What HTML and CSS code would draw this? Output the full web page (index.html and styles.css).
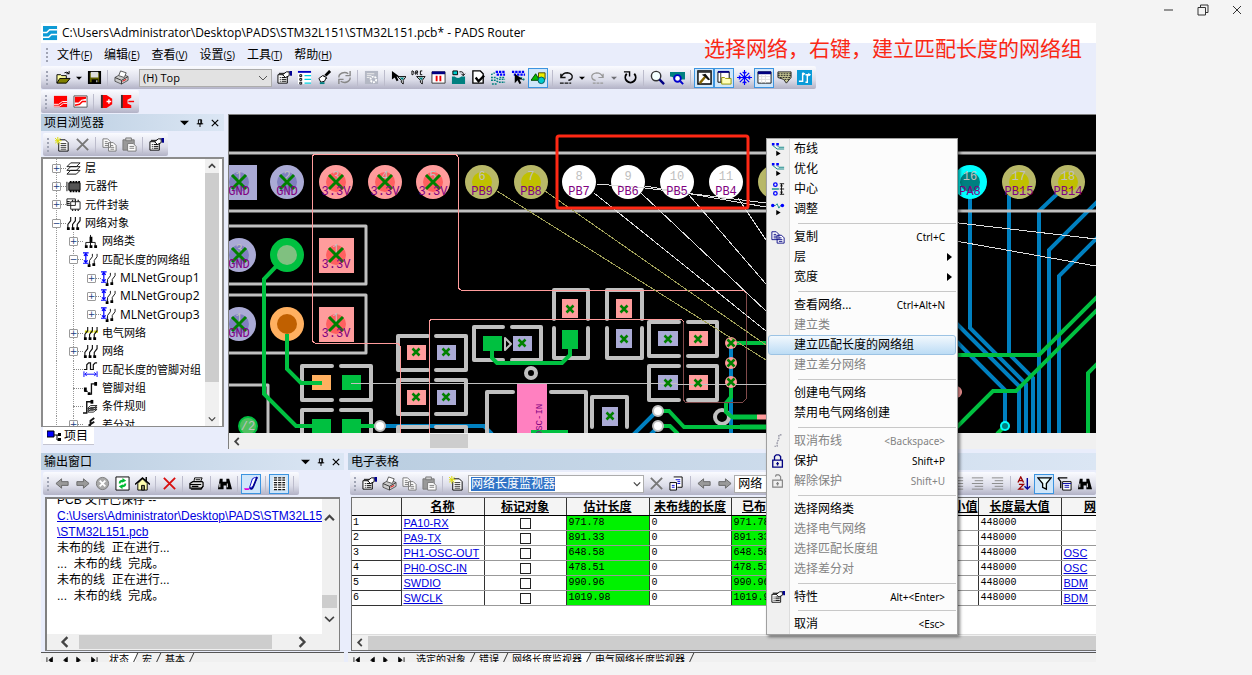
FILE: index.html
```html
<!DOCTYPE html>
<html lang="zh-CN">
<head>
<meta charset="utf-8">
<title>PADS Router</title>
<link rel="stylesheet" href="styles.css">
</head>
<body>
<svg class="defs" aria-hidden="true">
  <defs>
    <symbol id="i-open" viewBox="0 0 16 16"><path d="M1 14V5h4l1 1h5v3" fill="#ffffa0" stroke="#000"/><path d="M1 14l3-5h11l-4 5z" fill="#808000" stroke="#000"/><path d="M9 3q3-2 5 1m0-3v3h-3" fill="none" stroke="#000"/></symbol>
    <symbol id="i-save" viewBox="0 0 16 16"><path d="M2 2h12v12H2z" fill="#606000" stroke="#000" stroke-width="2"/><path d="M4 2h8v6H4z" fill="#ddd"/><path d="M5 10h7v4H5z" fill="#000"/><path d="M10 11h1v2h-1z" fill="#fff"/></symbol>
    <symbol id="i-print" viewBox="0 0 16 16"><path d="M1 8l7-4 7 3v4l-7 4-7-3z" fill="#ccc" stroke="#555"/><path d="M5 6l2-5 6 2-2 5z" fill="#fff" stroke="#555"/><path d="M1 8l7 3 7-4M8 11v4" fill="none" stroke="#333"/><path d="M9 12l4-2" stroke="#e00"/></symbol>
    <symbol id="i-print2" viewBox="0 0 16 16"><path d="M5 7l1-5h8l-2 5" fill="#fff" stroke="#000"/><path d="M1 8l3-2h10l1 1v4l-2 2H1z" fill="#ddd" stroke="#000" stroke-width="1.3"/><path d="M1 9h12M7 4h5M3 11h7M2 14h11l2-3" fill="none" stroke="#000" stroke-width="1.2"/></symbol>
    <symbol id="i-prop" viewBox="0 0 16 16"><path d="M1 5h10v9H1z" fill="#fff" stroke="#000"/><path d="M2 3h8v2H2z" fill="#333"/><path d="M3 8h1m1 0h5M3 10h1m1 0h5M3 12h1m1 0h5" stroke="#000"/><path d="M6 5l4-3h3v4L9 8z" fill="#fff" stroke="#000"/><path d="M13 1h3v5h-2z" fill="#000090"/></symbol>
    <symbol id="i-list" viewBox="0 0 16 16"><path d="M1 1h14v14H1z" fill="#fff"/><path d="M1 2h14" stroke="#0000c0" stroke-width="2"/><path d="M3 5h2v2H3zM3 9h2v2H3zM3 13h2v2H3z" fill="#fff" stroke="#000"/><path d="M8 6h7M8 10h7M8 14h7" stroke="#00d0e0" stroke-width="1.5"/></symbol>
    <symbol id="i-brush" viewBox="0 0 16 16"><path d="M14 1l-5 5" stroke="#000" stroke-width="3"/><path d="M7 5l4 4-4 1z" fill="#000"/><path d="M6 6l-4 3 2 4 4-1 2-4z" fill="#fff" stroke="#000"/><path d="M3 14h5" stroke="#008080" stroke-width="2"/></symbol>
    <symbol id="i-refresh" viewBox="0 0 16 16"><path d="M2 8a6 5 0 0 1 10-4m2-3v5H9M14 8a6 5 0 0 1-10 4m-2 3v-5h5" fill="none" stroke="#888" stroke-width="1.5"/></symbol>
    <symbol id="i-gear" viewBox="0 0 16 16"><path d="M1 1h14v14H1z" fill="#b4b8c4"/><path d="M3 4h8M3 6h5M3 8h3" stroke="#eee"/><circle cx="10" cy="10" r="3" fill="none" stroke="#fff" stroke-width="2" stroke-dasharray="2 1"/></symbol>
    <symbol id="i-cursor" viewBox="0 0 16 16"><path d="M1 1v9l3-2 2 4 2-1-2-4h3z" fill="#000"/><path d="M7 7h9l-3 4v4l-2-2v-2z" fill="#fff" stroke="#000"/><path d="M9 8h5l-2 3z" fill="#008080"/></symbol>
    <symbol id="i-drc" viewBox="0 0 16 16"><path d="M1 1v4h1l1-1V2L2 1zM5 5V1h2v2H5m1 0l1 2M12 1h-2v4h2" fill="none" stroke="#000"/><path d="M6 7h9l-3 4v4l-2-2v-2z" fill="#fff" stroke="#000"/><path d="M8 8h5l-2 3z" fill="#008080"/></symbol>
    <symbol id="i-cal" viewBox="0 0 16 16"><path d="M1 2h14v12H1z" fill="#fff" stroke="#333"/><path d="M1 3h14" stroke="#000080" stroke-width="3"/><path d="M6 6v6M10 6v6" stroke="#e00" stroke-width="2"/></symbol>
    <symbol id="i-comp" viewBox="0 0 16 16"><path d="M1 7h3a4 3 0 0 0 7 0h4v8H1z" fill="#008080"/><path d="M2 1h5v4H2z" fill="#0cc" stroke="#000"/><path d="M9 2q5-1 4 4m-2-2l2 2 2-2" fill="none" stroke="#000"/></symbol>
    <symbol id="i-check" viewBox="0 0 16 16"><path d="M2 1h8l3 3v10H2z" fill="#fff" stroke="#000" stroke-width="1.4"/><path d="M5 8l3 4 6-6" fill="none" stroke="#000" stroke-width="2.4"/></symbol>
    <symbol id="i-dots" viewBox="0 0 16 16"><path d="M5 2h10M6 5h9" stroke="#00f" stroke-width="2.500" stroke-dasharray="2.500 1"/><path d="M0 5l4-2M0 8h5l3 2h7M0 11h5l3 2h7M9 8h6M1 15h6" fill="none" stroke="#008080" stroke-width="1.500" stroke-dasharray="2 1"/></symbol>
    <symbol id="i-dotcur" viewBox="0 0 16 16"><path d="M1 2h14M3 5h12" stroke="#00f" stroke-width="2.500" stroke-dasharray="2.500 1"/><path d="M10 8l5 3" stroke="#008080" stroke-width="2" stroke-dasharray="2 1"/><path d="M4 4v10l3-3 2 4 2-1-2-4h4z" fill="#000"/></symbol>
    <symbol id="i-shapes" viewBox="0 0 16 16"><path d="M8 3h7v7H8z" fill="#ee0" stroke="#440"/><path d="M0 11l5-7 4 7z" fill="#0b0" stroke="#040"/><circle cx="11" cy="11" r="3.500" fill="#0cc" stroke="#055"/></symbol>
    <symbol id="i-undo" viewBox="0 0 16 16"><path d="M2 4v4h5M2 8q2-5 7-5 6 1 5 5-1 3-4 3" fill="none" stroke="#111" stroke-width="1.500"/><path d="M1 14h12" stroke="#111" stroke-width="1.500" stroke-dasharray="4 1"/></symbol>
    <symbol id="i-redo" viewBox="0 0 16 16"><path d="M14 4v4H9M14 8q-2-5-7-5-6 1-5 5 1 3 4 3" fill="none" stroke="#999" stroke-width="1.300"/><path d="M3 14h12" stroke="#999" stroke-width="1.400" stroke-dasharray="3 1"/></symbol>
    <symbol id="i-rot" viewBox="0 0 16 16"><path d="M4 4a5.500 5.500 0 1 0 8 0" fill="none" stroke="#000" stroke-width="2"/><path d="M1 2h6v5" fill="none" stroke="#000" stroke-width="1.500"/></symbol>
    <symbol id="i-zoom" viewBox="0 0 16 16"><circle cx="6.500" cy="6.500" r="5" fill="#f4ffff" stroke="#333" stroke-width="1.500"/><path d="M10 10l5 5" stroke="#000080" stroke-width="2.500"/></symbol>
    <symbol id="i-zoomb" viewBox="0 0 16 16"><path d="M0 2h16v8H4q0-3-4-3z" fill="#008080"/><circle cx="8" cy="9" r="3.500" fill="#fff" stroke="#00c" stroke-width="2"/><path d="M11 12l3 3" stroke="#00c" stroke-width="2"/></symbol>
    <symbol id="i-hammer" viewBox="0 0 16 16"><path d="M1 1h14v14H1z" fill="#fff" stroke="#000" stroke-width="1.500"/><path d="M1 2h14" stroke="#333" stroke-width="2"/><path d="M3 14l6-7" stroke="#860" stroke-width="2.500"/><path d="M5 5l4-1 5 6-2 1-4-4z" fill="#111"/></symbol>
    <symbol id="i-folder" viewBox="0 0 16 16"><path d="M1 2h12v11H1z" fill="#fff" stroke="#000"/><path d="M1 2h12" stroke="#000080" stroke-width="2"/><path d="M5 15V8h3l1 1h6v6z" fill="#ffb" stroke="#990"/><path d="M4 3v10" stroke="#333"/></symbol>
    <symbol id="i-export" viewBox="0 0 16 16"><path d="M5 1h9v11H9" fill="#fff" stroke="#000"/><path d="M7 4h5M9 6h3M9 8h3" stroke="#00c"/><path d="M1 7h7v8H1z" fill="#fff" stroke="#000"/><path d="M3 10h3M3 12h3" stroke="#00c"/></symbol>
    <symbol id="i-snow" viewBox="0 0 16 16"><path d="M8 0v16M0 8h16M3 3l10 10M13 3L3 13M6 2l2 2 2-2M6 14l2-2 2 2M2 6l2 2-2 2M14 6l-2 2 2 2" fill="none" stroke="#00f" stroke-width="1.200"/></symbol>
    <symbol id="i-sheet" viewBox="0 0 16 16"><path d="M1 2h14v12H1z" fill="#fff" stroke="#111"/><path d="M1 3h14" stroke="#000080" stroke-width="3"/><path d="M2 7h12M2 10h12M5 5v9M9 5v9" stroke="#ddd"/></symbol>
    <symbol id="i-key" viewBox="0 0 16 16"><path d="M1 2h14v6l-5 6-3-4-6-2z" fill="#cc9" stroke="#222"/><path d="M1 4h14M1 6h14M3 8h11M8 10h5" stroke="#222" stroke-dasharray="2 1"/></symbol>
    <symbol id="i-blue" viewBox="0 0 16 16"><path d="M0 0h16v16H0z" fill="#0a9bd8"/><path d="M2 12h4V4h2M9 13h2V5h3M9 5h2" fill="none" stroke="#fff" stroke-width="1.500"/><path d="M6 2l3 2-3 2zM12 3l3 2-3 2z" fill="#fff"/></symbol>
    <symbol id="i-r1" viewBox="0 0 16 16"><path d="M1 2h14v12H1z" fill="#f00"/><path d="M1 11h5l4-3h5M1 13h6l4-3h4" fill="none" stroke="#fff"/></symbol>
    <symbol id="i-r2" viewBox="0 0 16 16"><path d="M1 2h14v12H1z" fill="#fff" stroke="#555"/><path d="M2 3h12v2l-5 1-3 3H2z" fill="#f00"/><path d="M2 12l5-1 3-3h4" fill="none" stroke="#f00" stroke-width="1.500"/></symbol>
    <symbol id="i-r3" viewBox="0 0 16 16"><path d="M1 1h6l6 4v6l-6 4H1z" fill="#f00"/><path d="M2 1v14" stroke="#333" stroke-width="2"/><path d="M7 8h5M9.500 5.500v5" stroke="#fff" stroke-width="1.500"/></symbol>
    <symbol id="i-r4" viewBox="0 0 16 16"><path d="M2 1h10v3L8 6v4l4 2v3H2z" fill="#f00"/><path d="M2 1v14" stroke="#333" stroke-width="2"/><path d="M9 8h6" stroke="#f00" stroke-width="1.500"/></symbol>
    <symbol id="i-new" viewBox="0 0 16 16"><path d="M5 3h6l3 3v9H4V6" fill="#fff" stroke="#000"/><path d="M6 7h6M6 9h6M6 11h6M6 13h6" stroke="#333"/><path d="M0 1l6 6M6 1L0 7M3 0v8M0 4h7" stroke="#dd0"/></symbol>
    <symbol id="i-x" viewBox="0 0 16 16"><path d="M2 2l12 12M14 2L2 14" stroke="currentColor" stroke-width="2"/></symbol>
    <symbol id="i-copy" viewBox="0 0 16 16"><path d="M1 2h5l3 3v6H1zM7 6h5l3 3v6H7z" fill="#fff" stroke="currentColor"/><path d="M3 5h3M3 7h4M3 9h4M9 9h3M9 11h4M9 13h4" stroke="currentColor"/></symbol>
    <symbol id="i-paste" viewBox="0 0 16 16"><path d="M1 3h12v11H1z" fill="#999" stroke="#777"/><path d="M4 1h6v3H4z" fill="#ccc" stroke="#777"/><path d="M6 7h6l3 3v5H6z" fill="#fff" stroke="#777"/><path d="M8 10h5M8 12h5" stroke="#777"/></symbol>
    <symbol id="i-left" viewBox="0 0 16 16"><path d="M1 8l6-5v3h7v4H7v3z" fill="#9a9a9a" stroke="#666"/></symbol>
    <symbol id="i-right" viewBox="0 0 16 16"><path d="M15 8L9 3v3H2v4h7v3z" fill="#9a9a9a" stroke="#666"/></symbol>
    <symbol id="i-stop" viewBox="0 0 16 16"><circle cx="8" cy="8" r="6.500" fill="#aaa" stroke="#777"/><path d="M5 5l6 6M11 5l-6 6" stroke="#fff" stroke-width="2"/></symbol>
    <symbol id="i-reload" viewBox="0 0 16 16"><path d="M1 1h14v14H1z" fill="#fff" stroke="#000"/><path d="M4 8q0-4 4-4V2l4 3-4 2q-2-1-2 1zM12 8q0 4-4 4v2l-4-3 4-2q2 1 2-1z" fill="#0b3"/></symbol>
    <symbol id="i-home" viewBox="0 0 16 16"><path d="M3 8v7h10V8L8 3z" fill="#ffffb0" stroke="#000"/><path d="M0 9l8-7 8 7M12 5V1" fill="none" stroke="#000" stroke-width="1.500"/><path d="M7 10h3v5H7z" fill="#886" stroke="#000"/></symbol>
    <symbol id="i-bino" viewBox="0 0 16 16"><path d="M3 3h3v3h4V3h3l3 11h-6v-4H7v4H1z" fill="#000"/><path d="M3 8v4M11 8v4" stroke="#fff"/></symbol>
    <symbol id="i-pen" viewBox="0 0 16 16"><path d="M6 12l3-9q2-2 5-1l-4 9-4 2z" fill="#fff" stroke="#00c"/><path d="M14 1l-4 10q-1 4-4 2" fill="none" stroke="#000090" stroke-width="1.800"/><path d="M0 13h6l-1 2H1z" fill="#d0d"/></symbol>
    <symbol id="i-cols" viewBox="0 0 16 16"><path d="M1 1h14v14H1z" fill="#fff"/><path d="M2 2h12M2 4.500h12M2 7h12M2 9.500h12M2 12h12M2 14.500h12" stroke="#111" stroke-width="1.300" stroke-dasharray="3.500 1"/></symbol>
    <symbol id="i-align" viewBox="0 0 16 16"><path d="M2 2h12M5 5h9M2 8h12M5 11h9M2 14h12" stroke="#888"/></symbol>
    <symbol id="i-funnel" viewBox="0 0 16 16"><path d="M1 2h14l-5 6v6l-4-2V8z" fill="#eff" stroke="#000" stroke-width="1.400"/></symbol>
    <symbol id="i-funnel2" viewBox="0 0 16 16"><path d="M1 2h10M1 2l3 4v7" fill="none" stroke="#000" stroke-width="1.400"/><path d="M6 6h9v9H6z" fill="#fff" stroke="#000"/><path d="M6 8h9M8 10h5M8 12h5" stroke="#00a"/></symbol>
    <symbol id="i-sort" viewBox="0 0 16 16"><path d="M1 7l3-6 3 6M2 5h4M2 9h5l-5 5h5" fill="none" stroke="#900" stroke-width="1.400"/><path d="M11 2v12m-3-3l3 3 3-3" fill="none" stroke="#009" stroke-width="1.500"/></symbol>
    <symbol id="t-layer" viewBox="0 0 16 16"><path d="M5 10h10l-4 4H1zM5 6h10l-4 4H1zM5 2h10l-4 4H1z" fill="#fff" stroke="#111"/></symbol>
    <symbol id="t-chip" viewBox="0 0 16 16"><path d="M1 3v10M3 4h12v8H3z" fill="#555" stroke="#000"/><path d="M5 2v2m3-2v2m3-2v2m3-2v2M5 12v2m3-2v2m3-2v2m3-2v2" stroke="#000" stroke-width="2"/></symbol>
    <symbol id="t-pkg" viewBox="0 0 16 16"><path d="M1 2h9v7H1zM5 5h10v8H5z" fill="#fff" stroke="#222"/><path d="M7 3v2m3-2v2m3-2v2m-6 8v2m3-2v2m3-2v2M1 5h3M1 7h3" stroke="#222" stroke-width="1.400"/></symbol>
    <symbol id="t-net" viewBox="0 0 16 16"><path d="M2 14V9l3-4V1M7 14V9l3-4V1M12 14V9l3-4V1" fill="none" stroke="#111" stroke-width="1.200"/><path d="M1 12h3v3H1zM6 12h3v3H6zM11 12h3v3h-3z"/></symbol>
    <symbol id="t-enet" viewBox="0 0 16 16"><path d="M2 6h4M7 6h4M12 6h4" stroke="#dd0" stroke-width="2.500"/><path d="M2 14V9l3-4V1M7 14V9l3-4V1M12 14V9l3-4V1" fill="none" stroke="#111" stroke-width="1.200"/><path d="M1 12h3v3H1zM6 12h3v3H6zM11 12h3v3h-3z"/></symbol>
    <symbol id="t-class" viewBox="0 0 16 16"><path d="M8 1v12M3 14V9h10v5" fill="none" stroke="#111"/><path d="M7 3h3v6H7zM2 12h3v3H2zM7 12h3v3H7zM12 12h3v3h-3z"/></symbol>
    <symbol id="t-mln" viewBox="0 0 16 16"><path d="M3 2v9M1 4l2-2 2 2M1 9l2 2 2-2M0 1h6M0 12h6" fill="none" stroke="#00f" stroke-width="1.300"/><path d="M7 14V9l3-4V2M12 14V9l3-4V2" fill="none" stroke="#111"/><path d="M5 13h3v3H5zM10 12h3v3h-3z"/></symbol>
    <symbol id="t-mlp" viewBox="0 0 16 16"><path d="M1 8h3V3l2-2h2v7h3V3l2-2h2" fill="none" stroke="#111" stroke-width="1.300"/><path d="M2 13h12M4 11l-2 2 2 2M12 11l2 2-2 2M1 10v6M15 10v6" fill="none" stroke="#00f"/></symbol>
    <symbol id="t-pin" viewBox="0 0 16 16"><path d="M2 8v3h3M6 14h3V3h5" fill="none" stroke="#111" stroke-width="1.400"/><path d="M1 7h3v4H1zM12 1h3v4h-3zM5 12h3v3H5z"/></symbol>
    <symbol id="t-rule" viewBox="0 0 16 16"><path d="M0 15h4V3h6" fill="none" stroke="#111" stroke-width="1.500"/><path d="M8 11h7l-4 3H5zM8 9h7l-4 3H5zM8 7h7l-4 3H5z" fill="#fff" stroke="#222"/><path d="M8 1h3v4H8z"/></symbol>
    <symbol id="t-diff" viewBox="0 0 16 16"><path d="M3 15l5-7V4l4-3M6 9l6-4" fill="none" stroke="#111" stroke-width="2"/></symbol>
    <symbol id="m-route" viewBox="0 0 16 16"><path d="M1 1h3v3H1zM6 1h3v3H6z" fill="#00f"/><path d="M2 4l5 4h8M7 4l2 2h6" fill="none" stroke="#008080"/><path d="M6 10l5 3-5 3z"/></symbol>
    <symbol id="m-center" viewBox="0 0 16 16"><circle cx="5" cy="3" r="2" fill="none" stroke="#00f" stroke-width="1.500"/><circle cx="5" cy="13" r="2" fill="none" stroke="#00f" stroke-width="1.500"/><path d="M1 8h8" stroke="#008080" stroke-width="1.500"/><path d="M12 2v12M10 2h5M10 8h5M10 14h5M11 5l1-2 1 2M11 11l1 2 1-2" fill="none" stroke="#000"/></symbol>
    <symbol id="m-tune" viewBox="0 0 16 16"><path d="M3 4h2l2-2 2 5 2-3h2" fill="none" stroke="#008080"/><circle cx="2" cy="4" r="2" fill="#00f"/><circle cx="13" cy="4" r="2" fill="#00f"/><path d="M6 9l5 3-5 3z"/></symbol>
    <symbol id="m-unroute" viewBox="0 0 16 16"><path d="M12 1H9v5L7 9v5H4" fill="none" stroke="#889" stroke-width="1.300" stroke-dasharray="2 1"/></symbol>
    <symbol id="m-lock" viewBox="0 0 16 16"><path d="M4 7V3l2-2h3l2 2v4M2 7h11v8H2z" fill="none" stroke="currentColor" stroke-width="1.500"/><path d="M7.500 9v4M6 11h3" stroke="currentColor" stroke-width="1.500"/></symbol>
    <symbol id="m-unlock" viewBox="0 0 16 16"><path d="M5 3l1-2h3l2 2v4M2 7h11v8H2z" fill="none" stroke="currentColor" stroke-width="1.300"/><path d="M7.500 9v4M6 11h3" stroke="currentColor" stroke-width="1.500"/></symbol>
    <symbol id="c-up" viewBox="0 0 10 10"><path d="M1 7l4-4 4 4" fill="none" stroke="#444" stroke-width="2"/></symbol>
    <symbol id="c-down" viewBox="0 0 10 10"><path d="M1 3l4 4 4-4" fill="none" stroke="#444" stroke-width="1.500"/></symbol>
    <symbol id="c-left" viewBox="0 0 10 10"><path d="M7 1L3 5l4 4" fill="none" stroke="#444" stroke-width="2"/></symbol>
    <symbol id="c-right" viewBox="0 0 10 10"><path d="M3 1l4 4-4 4" fill="none" stroke="#444" stroke-width="2"/></symbol>
    <symbol id="c-tri" viewBox="0 0 10 10"><path d="M0 3h10L5 8z"/></symbol>
    <symbol id="c-pin" viewBox="0 0 10 10"><path d="M3 1h4v5H3zM1 6h8M5 6v4M6 1v5" fill="none" stroke="#000" stroke-width="1.200"/></symbol>
    <symbol id="c-x" viewBox="0 0 10 10"><path d="M1 1l8 8M9 1L1 9" stroke="#000" stroke-width="1.500"/></symbol>
    <symbol id="n-nav" viewBox="0 0 56 8"><path d="M1 1v7M7 1v7L3 4zM23 1v7l-4-4zM33 1v7l4-4zM49 1v7l4-4zM55 1v7" stroke="#222" stroke-width="1"/></symbol>
    <symbol id="x" viewBox="-8 -8 16 16" overflow="visible"><path d="M-7-7L7 7M7-7L-7 7" stroke="#008000" stroke-width="3"/></symbol>
    <symbol id="xs" viewBox="-4 -4 8 8" overflow="visible"><path d="M-3.500-3.500l7 7M3.500-3.500l-7 7" stroke="#008000" stroke-width="2.500"/></symbol>
  </defs>
</svg>

<div class="desk-controls">
  <button aria-label="最小化"><svg viewBox="0 0 12 12"><path d="M1 6h9" stroke="#333"/></svg></button>
  <button aria-label="还原"><svg viewBox="0 0 12 12"><path d="M1 3.500h7.500V11H1zM3.500 3V1H11v7.500H9" fill="none" stroke="#333"/></svg></button>
  <button aria-label="关闭"><svg viewBox="0 0 12 12"><path d="M2 2l8 8M10 2l-8 8" stroke="#333"/></svg></button>
</div>

<main class="app">
  <header class="title">
    <svg class="logo" viewBox="0 0 16 16"><path d="M0 0h15v15H0z" fill="#0e9bd5"/><path d="M0 7h4l3-3h8M0 12h6l3-3h6" fill="none" stroke="#fff" stroke-width="1.500"/></svg>
    <span>C:\Users\Administrator\Desktop\PADS\STM32L151\STM32L151.pcb* - PADS Router</span>
  </header>
  <nav class="menubar">
    <i class="grip"></i>
    <button>文件<small>(<u>F</u>)</small></button><button>编辑<small>(<u>E</u>)</small></button><button>查看<small>(<u>V</u>)</small></button><button>设置<small>(<u>S</u>)</small></button><button>工具<small>(<u>T</u>)</small></button><button>帮助<small>(<u>H</u>)</small></button>
  </nav>
  <div class="band">
    <div class="toolbar">
      <i class="grip"></i>
      <button aria-label="打开"><svg><use href="#i-open"/></svg></button><button class="drop" aria-label="最近文件"><svg><use href="#c-tri"/></svg></button>
      <button aria-label="保存"><svg><use href="#i-save"/></svg></button><i class="sep"></i>
      <button aria-label="打印"><svg><use href="#i-print"/></svg></button>
      <select class="combo layer" aria-label="层"><option>(H) Top</option></select>
      <button aria-label="特性"><svg><use href="#i-prop"/></svg></button><button aria-label="选项"><svg><use href="#i-list"/></svg></button><button aria-label="重画"><svg><use href="#i-brush"/></svg></button><button aria-label="刷新"><svg><use href="#i-refresh"/></svg></button><i class="sep"></i>
      <button aria-label="设置"><svg><use href="#i-gear"/></svg></button><i class="sep"></i>
      <button aria-label="选择过滤"><svg><use href="#i-cursor"/></svg></button><button aria-label="DRC 过滤"><svg><use href="#i-drc"/></svg></button><button aria-label="暂停"><svg><use href="#i-cal"/></svg></button><button aria-label="元件"><svg><use href="#i-comp"/></svg></button><button aria-label="验证"><svg><use href="#i-check"/></svg></button><button aria-label="布线"><svg><use href="#i-dots"/></svg></button><button aria-label="交互布线"><svg><use href="#i-dotcur"/></svg></button><button class="on" aria-label="形状"><svg><use href="#i-shapes"/></svg></button><i class="sep wide"></i>
      <button aria-label="撤销"><svg><use href="#i-undo"/></svg></button><button class="drop" aria-label="撤销列表"><svg><use href="#c-tri"/></svg></button>
      <button aria-label="重做"><svg><use href="#i-redo"/></svg></button><button class="drop dim" aria-label="重做列表"><svg><use href="#c-tri"/></svg></button>
      <button aria-label="重复"><svg><use href="#i-rot"/></svg></button><i class="sep"></i>
      <button aria-label="缩放"><svg><use href="#i-zoom"/></svg></button><button aria-label="板视图"><svg><use href="#i-zoomb"/></svg></button><i class="sep"></i>
      <button class="on" aria-label="输出窗口"><svg><use href="#i-hammer"/></svg></button><button class="on" aria-label="项目浏览器"><svg><use href="#i-folder"/></svg></button><button aria-label="导航"><svg><use href="#i-snow"/></svg></button><button class="on" aria-label="电子表格"><svg><use href="#i-sheet"/></svg></button><button aria-label="快捷键"><svg><use href="#i-key"/></svg></button><button aria-label="布局"><svg><use href="#i-blue"/></svg></button>
    </div>
  </div>
  <div class="band">
    <div class="toolbar slim">
      <i class="grip"></i>
      <button aria-label="灌铜"><svg><use href="#i-r1"/></svg></button><button aria-label="铺铜"><svg><use href="#i-r2"/></svg></button><i class="sep"></i><button aria-label="添加"><svg><use href="#i-r3"/></svg></button><button aria-label="移除"><svg><use href="#i-r4"/></svg></button>
    </div>
  </div>

  <section class="work">
    <aside class="project">
      <div class="phead"><h2>项目浏览器</h2><button aria-label="菜单"><svg><use href="#c-tri"/></svg></button><button aria-label="固定"><svg><use href="#c-pin"/></svg></button><button aria-label="关闭"><svg><use href="#c-x"/></svg></button></div>
      <div class="pbar"><div class="toolbar slim">
        <i class="grip"></i>
        <button aria-label="新建"><svg><use href="#i-new"/></svg></button><button class="gray" aria-label="删除"><svg><use href="#i-x"/></svg></button><i class="sep"></i><button class="gray" aria-label="复制"><svg><use href="#i-copy"/></svg></button><button aria-label="粘贴"><svg><use href="#i-paste"/></svg></button><i class="sep"></i><button aria-label="特性"><svg><use href="#i-prop"/></svg></button>
      </div></div>
      <div class="treebox">
        <ul class="tree">
          <li class="l0"><button>+</button><i></i><svg><use href="#t-layer"/></svg>层</li>
          <li class="l0"><button>+</button><i></i><svg><use href="#t-chip"/></svg>元器件</li>
          <li class="l0"><button>+</button><i></i><svg><use href="#t-pkg"/></svg>元件封装</li>
          <li class="l0"><button>−</button><i></i><svg><use href="#t-net"/></svg>网络对象</li>
          <li class="l1"><button>+</button><i></i><svg><use href="#t-class"/></svg>网络类</li>
          <li class="l1"><button>−</button><i></i><svg><use href="#t-mln"/></svg>匹配长度的网络组</li>
          <li class="l2"><button>+</button><i></i><svg><use href="#t-mln"/></svg>MLNetGroup1</li>
          <li class="l2"><button>+</button><i></i><svg><use href="#t-mln"/></svg>MLNetGroup2</li>
          <li class="l2"><button>+</button><i></i><svg><use href="#t-mln"/></svg>MLNetGroup3</li>
          <li class="l1"><button>+</button><i></i><svg><use href="#t-enet"/></svg>电气网络</li>
          <li class="l1"><button>+</button><i></i><svg><use href="#t-net"/></svg>网络</li>
          <li class="l1 leaf"><i></i><svg><use href="#t-mlp"/></svg>匹配长度的管脚对组</li>
          <li class="l1 leaf"><i></i><svg><use href="#t-pin"/></svg>管脚对组</li>
          <li class="l1 leaf"><i></i><svg><use href="#t-rule"/></svg>条件规则</li>
          <li class="l1"><button>+</button><i></i><svg><use href="#t-diff"/></svg>差分对</li>
        </ul>
        <div class="vscroll"><svg><use href="#c-up"/></svg><i class="tree-thumb"></i><svg><use href="#c-down"/></svg></div>
      </div>
      <div class="ptab"><button><svg viewBox="0 0 14 12"><path d="M0 1h7v6H0z" fill="#00f" stroke="#000"/><path d="M7 5h3v5h3M10 5h3" fill="none" stroke="#000"/><path d="M11 3h3v3h-3zM11 8h3v3h-3z"/></svg>项目</button></div>
    </aside>

    <div class="board">
      <svg class="pcb" viewBox="229 115 867 318" preserveAspectRatio="xMinYMin slice">
        <g class="blue">
          <path d="M970 195V328l56 56V434M1009 195V354l24 24V434M950 317l69 69V434M950 335l55 55V426M1057 194l-18 17V434M1098 201l-49 49V434M1098 237l-39 39V434M385 426H484l8 8M731 343V434M655 413l-22 22M656 429l-6 6"/>
        </g>
        <g class="silk">
          <path d="M229 153H1096M229 211H1096" stroke-width="3"/>
          <path d="M229 226H366V284H229M229 295H366V353H229M229 385H268V434" stroke-width="3"/>
          <path d="M332 366H302V400H332M341 366H371V400H341M332 410H302V434M341 410H371V434"/>
          <path d="M428 336H398V370H428M436 336H466V370H436M428 380H398V414H428M436 380H466V414H436M428 427H398V434M436 427H466V434"/>
          <path d="M503 327H474V360H503M512 327H541V360H512M554 319V290H588V319M554 328V358H588V328M607 319V290H642V319M607 328V358H642V328"/>
          <path d="M679 322H649V356H679M688 322H717V356H688M679 366H649V400H679M688 366H717V400H688M487 434V392H513M551 392H586V434M592 427V397H627V427"/>
          <circle cx="531" cy="373" r="5"/><circle cx="722" cy="417" r="7"/><path d="M505 338l6 6-6 6z" stroke-width="2"/>
        </g>
        <g class="green">
          <path d="M287 255l-23 24V394l32 32H316M361 426H376M492 345V358l5 5H562l8-8V345M663 411h6l15 16H766M663 426h7l8 8M731 343H766M731 382V397l-5 6v9l6 5H757M950 355H1039l59-59M950 434l43-43h23l82-82M1098 363l-10 10V434M997 434l8-8"/>
        </g>
        <path d="M757 417H768" stroke="#ff9c9c" stroke-width="5"/>
        <path d="M733 417H757M740 427H768" stroke="#00c040" stroke-width="5"/>
        <g class="lav">
          <path d="M229 165h28v35h-28z"/><circle cx="287" cy="182" r="17"/><circle cx="239" cy="255" r="17"/><circle cx="239" cy="324" r="17"/>
          <path d="M437 345h19v15h-19zM437 390h19v15h-19zM513 336h19v15h-19zM616 329h16v19h-16zM658 331h20v15h-20zM658 375h20v15h-20zM602 407h16v19h-16z"/>
        </g>
        <g fill="#8080c0"><circle cx="239" cy="182" r="10"/><circle cx="287" cy="182" r="10"/><circle cx="239" cy="255" r="10"/><circle cx="239" cy="324" r="10"/></g>
        <g class="pink">
          <circle cx="336" cy="182" r="17"/><circle cx="385" cy="182" r="17"/><circle cx="433" cy="182" r="17"/>
          <path d="M319 238h35v35h-35zM319 307h35v35h-35zM407 345h19v15h-19zM407 390h19v15h-19zM562 299h16v19h-16zM616 299h16v19h-16zM689 331h19v15h-19zM689 375h19v15h-19z"/>
          <circle cx="731" cy="343" r="6"/><circle cx="731" cy="363" r="6"/><circle cx="731" cy="382" r="6"/><circle cx="956" cy="392" r="6"/>
        </g>
        <g fill="#ff6060"><circle cx="336" cy="182" r="10"/><circle cx="385" cy="182" r="10"/><circle cx="433" cy="182" r="10"/><circle cx="336" cy="255" r="10"/><circle cx="336" cy="324" r="10"/></g>
        <path d="M517 384h30v50h-30z" fill="#ff80c0"/><path d="M531 432h37" stroke="#00c040" stroke-width="4"/>
        <g fill="#00c040"><circle cx="287" cy="255" r="17"/><path d="M342 375h19v15h-19zM312 419h19v15h-19zM342 419h19v15h-19zM483 336h19v15h-19zM562 330h16v19h-16z"/><circle cx="248" cy="426" r="10"/></g>
        <circle cx="287" cy="255" r="10" fill="#80c080"/><circle cx="248" cy="426" r="8" fill="#50c060"/>
        <circle cx="287" cy="324" r="17" fill="#ffb060"/><circle cx="287" cy="324" r="10" fill="#c06000"/><path d="M312 375h19v15h-19z" fill="#ffb060"/>
        <path d="M287 334V369l14 14H322" fill="none" stroke="#00c040" stroke-width="4"/>
        <g fill="#b8b868"><circle cx="482" cy="182" r="17"/><circle cx="531" cy="182" r="17"/><circle cx="775" cy="182" r="17"/><circle cx="1019" cy="182" r="17"/><circle cx="1068" cy="182" r="17"/></g>
        <g fill="#c0c000"><circle cx="482" cy="182" r="10"/><circle cx="531" cy="182" r="10"/><circle cx="1019" cy="182" r="10"/><circle cx="1068" cy="182" r="10"/></g>
        <circle cx="970" cy="182" r="17" fill="#0ff"/><circle cx="970" cy="182" r="10" fill="#008080"/>
        <circle cx="1005" cy="426" r="5" fill="#0ff"/><circle cx="1005" cy="426" r="3" fill="#008080"/>
        <g class="white"><circle cx="579" cy="182" r="17"/><circle cx="628" cy="182" r="17"/><circle cx="677" cy="182" r="17"/><circle cx="726" cy="182" r="17"/></g>
        <g fill="#fff" stroke="#c0c0c0" stroke-width="2"><circle cx="380" cy="426" r="5"/><circle cx="658" cy="411" r="5"/><circle cx="658" cy="426" r="5"/></g>
        <g class="thin">
          <path d="M429 434V322l2-3H681l2 2V399l2 3" stroke="#ff9c9c"/>
          <path d="M312 157l2-3H456l2 3V288l3 2H744l2 3M312 157V341l3 2H398l2 3V434" stroke="#ff9c9c"/>
          <path d="M746 293V399l-3 3H685l-2-3V322" stroke="#804a4a"/>
          <path d="M351 383H588L766 385" stroke="#c0c0c0"/>
          <path d="M497 191L766 360M545 191L766 345" stroke="#a0a058"/>
          <path d="M594 193L766 331M641 193L766 311M689 195L766 284M738 198L766 240M597 184l48 4 121 15M645 186L766 207M950 222l146 17M950 240l146 26" stroke="#ddd"/>
        </g>
        <g class="num"><text x="239" y="180">1</text><text x="287" y="180">2</text><text x="336" y="180">3</text><text x="385" y="180">4</text><text x="433" y="180">5</text><text x="482" y="180">6</text><text x="531" y="180">7</text><text x="579" y="180">8</text><text x="628" y="180">9</text><text x="677" y="180">10</text><text x="726" y="180">11</text><text x="970" y="180">16</text><text x="1019" y="180">17</text><text x="1068" y="180">18</text><text x="239" y="253">3</text><text x="336" y="253">1</text><text x="239" y="322">1</text><text x="336" y="322">1</text><text x="248" y="430">/2</text></g>
        <g class="marks">
          <use href="#x" x="231" y="174" width="16" height="16"/><use href="#x" x="279" y="174" width="16" height="16"/><use href="#x" x="328" y="174" width="16" height="16"/><use href="#x" x="377" y="174" width="16" height="16"/><use href="#x" x="425" y="174" width="16" height="16"/><use href="#x" x="231" y="247" width="16" height="16"/><use href="#x" x="328" y="247" width="16" height="16"/><use href="#x" x="231" y="316" width="16" height="16"/><use href="#x" x="328" y="316" width="16" height="16"/>
          <use href="#xs" x="412" y="348" width="8" height="8"/><use href="#xs" x="442" y="348" width="8" height="8"/><use href="#xs" x="412" y="393" width="8" height="8"/><use href="#xs" x="442" y="393" width="8" height="8"/><use href="#xs" x="518" y="339" width="8" height="8"/><use href="#xs" x="566" y="305" width="8" height="8"/><use href="#xs" x="620" y="305" width="8" height="8"/><use href="#xs" x="620" y="335" width="8" height="8"/><use href="#xs" x="664" y="335" width="8" height="8"/><use href="#xs" x="694" y="335" width="8" height="8"/><use href="#xs" x="664" y="379" width="8" height="8"/><use href="#xs" x="694" y="379" width="8" height="8"/><use href="#xs" x="606" y="412" width="8" height="8"/><use href="#xs" x="727" y="339" width="8" height="8"/><use href="#xs" x="727" y="359" width="8" height="8"/><use href="#xs" x="727" y="378" width="8" height="8"/>
        </g>
        <g class="lbl"><text x="239" y="195">GND</text><text x="287" y="195">GND</text><text x="336" y="195">3.3V</text><text x="385" y="195">3.3V</text><text x="433" y="195">3.3V</text><text x="482" y="195">PB9</text><text x="531" y="195">PB8</text><text x="579" y="195">PB7</text><text x="628" y="195">PB6</text><text x="677" y="195">PB5</text><text x="726" y="195">PB4</text><text x="970" y="195">PA8</text><text x="1019" y="195">PB15</text><text x="1068" y="195">PB14</text><text x="239" y="268">GND</text><text x="336" y="268">3.3V</text><text x="239" y="337">GND</text><text x="336" y="337">3.3V</text><text class="tiny" transform="translate(542 420) rotate(-90)">OSC-IN</text></g>
        <rect x="557" y="136" width="191" height="72" rx="2" fill="none" stroke="#ff2814" stroke-width="3"/>
      </svg>
      <div class="hscroll"><svg><use href="#c-left"/></svg><i class="board-thumb"></i></div>
    </div>
  </section>

  <section class="dock">
    <div class="output">
      <div class="phead"><h2>输出窗口</h2><button aria-label="菜单"><svg><use href="#c-tri"/></svg></button><button aria-label="固定"><svg><use href="#c-pin"/></svg></button><button aria-label="关闭"><svg><use href="#c-x"/></svg></button></div>
      <div class="pbar"><div class="toolbar slim">
        <i class="grip"></i>
        <button aria-label="后退"><svg><use href="#i-left"/></svg></button><button aria-label="前进"><svg><use href="#i-right"/></svg></button><button aria-label="停止"><svg><use href="#i-stop"/></svg></button><button aria-label="刷新"><svg><use href="#i-reload"/></svg></button><button aria-label="主页"><svg><use href="#i-home"/></svg></button><i class="sep"></i><button class="red" aria-label="清除"><svg><use href="#i-x"/></svg></button><i class="sep"></i><button aria-label="打印"><svg><use href="#i-print2"/></svg></button><i class="sep wide"></i><button aria-label="查找"><svg><use href="#i-bino"/></svg></button><i class="sep"></i><button class="on" aria-label="记录"><svg><use href="#i-pen"/></svg></button><i class="sep wide"></i><button class="on" aria-label="列表"><svg><use href="#i-cols"/></svg></button><i class="sep wide"></i>
      </div></div>
      <div class="logbox">
        <div class="log">
          <p>PCB 文件已保存 --</p>
          <p><a href="#pcb">C:\Users\Administrator\Desktop\PADS\STM32L15<br>\STM32L151.pcb</a></p>
          <p>未布的线  正在进行...</p>
          <p>...  未布的线  完成。</p>
          <p>未布的线  正在进行...</p>
          <p>...  未布的线  完成。</p>
        </div>
        <div class="vscroll log-v"><svg><use href="#c-up"/></svg><i class="log-vthumb"></i><svg><use href="#c-down"/></svg></div>
        <div class="hscroll log-h"><svg><use href="#c-left"/></svg><i class="log-hthumb"></i><svg><use href="#c-right"/></svg></div>
      </div>
      <div class="tabs"><svg><use href="#n-nav"/></svg><b class="cur">状态</b><b>宏</b><b>基本</b></div>
    </div>

    <div class="sheet">
      <div class="phead"><h2>电子表格</h2></div>
      <div class="pbar"><div class="toolbar slim full">
        <i class="grip"></i>
        <button aria-label="特性"><svg><use href="#i-prop"/></svg></button><button aria-label="打印"><svg><use href="#i-print"/></svg></button><button class="gray" aria-label="复制"><svg><use href="#i-copy"/></svg></button><button aria-label="粘贴"><svg><use href="#i-paste"/></svg></button><i class="sep"></i><button aria-label="新建"><svg><use href="#i-new"/></svg></button>
        <div class="combo view"><span>网络长度监视器</span><svg><use href="#c-down"/></svg></div>
        <button class="gray" aria-label="删除"><svg><use href="#i-x"/></svg></button><button aria-label="导出"><svg><use href="#i-export"/></svg></button><i class="sep wide"></i><button aria-label="后退"><svg><use href="#i-left"/></svg></button><button aria-label="前进"><svg><use href="#i-right"/></svg></button>
        <select class="combo scope" aria-label="范围"><option>网络</option></select>
        <button aria-label="左对齐"><svg><use href="#i-align"/></svg></button><button aria-label="居中"><svg><use href="#i-align"/></svg></button><button aria-label="右对齐"><svg><use href="#i-align"/></svg></button><i class="sep"></i><button aria-label="排序"><svg><use href="#i-sort"/></svg></button><button class="on" aria-label="过滤"><svg><use href="#i-funnel"/></svg></button><button aria-label="过滤设置"><svg><use href="#i-funnel2"/></svg></button><button aria-label="查找"><svg><use href="#i-bino"/></svg></button>
      </div></div>
      <div class="grid">
        <table>
          <colgroup><col class="c-no"><col class="cw"><col class="c"><col class="cw"><col class="c"><col class="c"><col class="c"><col class="cw"><col class="cw"><col class="c"></colgroup>
          <thead><tr><th></th><th>名称</th><th>标记对象</th><th>估计长度</th><th>未布线的长度</th><th>已布线长度</th><th></th><th class="end">长度最小值</th><th>长度最大值</th><th>网络类</th></tr></thead>
          <tbody>
            <tr><td>1</td><td><a href="#n1">PA10-RX</a></td><td class="mark"><input type="checkbox" aria-label="标记 PA10-RX"></td><td class="ok">971.78</td><td>0</td><td class="ok">971.78</td><td></td><td></td><td>448000</td><td></td></tr>
            <tr><td>2</td><td><a href="#n2">PA9-TX</a></td><td class="mark"><input type="checkbox" aria-label="标记 PA9-TX"></td><td class="ok">891.33</td><td>0</td><td class="ok">891.33</td><td></td><td></td><td>448000</td><td></td></tr>
            <tr><td>3</td><td><a href="#n3">PH1-OSC-OUT</a></td><td class="mark"><input type="checkbox" aria-label="标记 PH1-OSC-OUT"></td><td class="ok">648.58</td><td>0</td><td class="ok">648.58</td><td></td><td></td><td>448000</td><td><a href="#c3">OSC</a></td></tr>
            <tr><td>4</td><td><a href="#n4">PH0-OSC-IN</a></td><td class="mark"><input type="checkbox" aria-label="标记 PH0-OSC-IN"></td><td class="ok">478.51</td><td>0</td><td class="ok">478.51</td><td></td><td></td><td>448000</td><td><a href="#c4">OSC</a></td></tr>
            <tr><td>5</td><td><a href="#n5">SWDIO</a></td><td class="mark"><input type="checkbox" aria-label="标记 SWDIO"></td><td class="ok">990.96</td><td>0</td><td class="ok">990.96</td><td></td><td></td><td>448000</td><td><a href="#c5">BDM</a></td></tr>
            <tr><td>6</td><td><a href="#n6">SWCLK</a></td><td class="mark"><input type="checkbox" aria-label="标记 SWCLK"></td><td class="ok">1019.98</td><td>0</td><td class="ok">1019.98</td><td></td><td></td><td>448000</td><td><a href="#c6">BDM</a></td></tr>
          </tbody>
        </table>
        <div class="hscroll sheet-h"><svg><use href="#c-left"/></svg><i class="sheet-thumb"></i></div>
      </div>
      <div class="tabs"><svg><use href="#n-nav"/></svg><b>选定的对象</b><b>错误</b><b class="cur">网络长度监视器</b><b>电气网络长度监视器</b></div>
    </div>
  </section>

  <p class="note">选择网络，右键，建立匹配长度的网络组</p>

  <menu class="context">
    <li><button><svg><use href="#m-route"/></svg>布线</button></li>
    <li><button><svg><use href="#m-route"/></svg>优化</button></li>
    <li><button><svg><use href="#m-center"/></svg>中心</button></li>
    <li><button><svg><use href="#m-tune"/></svg>调整</button></li>
    <li class="rule"></li>
    <li><button><svg class="navy"><use href="#i-copy"/></svg>复制<kbd>Ctrl+C</kbd></button></li>
    <li><button><svg></svg>层<i class="sub"></i></button></li>
    <li><button><svg></svg>宽度<i class="sub"></i></button></li>
    <li class="rule"></li>
    <li><button><svg></svg>查看网络...<kbd>Ctrl+Alt+N</kbd></button></li>
    <li><button disabled><svg></svg>建立类</button></li>
    <li><button class="hot"><svg></svg>建立匹配长度的网络组</button></li>
    <li><button disabled><svg></svg>建立差分网络</button></li>
    <li class="rule"></li>
    <li><button><svg></svg>创建电气网络</button></li>
    <li><button><svg></svg>禁用电气网络创建</button></li>
    <li class="rule"></li>
    <li><button disabled><svg><use href="#m-unroute"/></svg>取消布线<kbd>&lt;Backspace&gt;</kbd></button></li>
    <li><button><svg class="navy"><use href="#m-lock"/></svg>保护<kbd>Shift+P</kbd></button></li>
    <li><button disabled><svg><use href="#m-unlock"/></svg>解除保护<kbd>Shift+U</kbd></button></li>
    <li class="rule"></li>
    <li><button><svg></svg>选择网络类</button></li>
    <li><button disabled><svg></svg>选择电气网络</button></li>
    <li><button disabled><svg></svg>选择匹配长度组</button></li>
    <li><button disabled><svg></svg>选择差分对</button></li>
    <li class="rule"></li>
    <li><button><svg><use href="#i-prop"/></svg>特性<kbd>Alt+&lt;Enter&gt;</kbd></button></li>
    <li class="rule thinrule"></li>
    <li><button><svg></svg>取消<kbd>&lt;Esc&gt;</kbd></button></li>
  </menu>
</main>
</body>
</html>
```
FILE: styles.css
```css
* { box-sizing: border-box; }
body {
  margin: 0;
  height: 100vh;
  display: flex;
  flex-direction: column;
  padding-bottom: 13px;
  overflow: hidden;
  background: #f4f4f4;
  color: #000;
  font: 12px/16px "Open Sans", "Noto Sans CJK SC", sans-serif;
}
button { border: 0; padding: 0; background: none; font: inherit; color: inherit; }
h2, p, ul, menu { margin: 0; padding: 0; font-weight: normal; list-style: none; }
i { font-style: normal; }
a { color: #0000e0; text-decoration: underline; }
.defs { position: absolute; width: 0; height: 0; }

.desk-controls { flex: none; height: 23px; display: flex; justify-content: flex-end; align-items: flex-start; padding: 4px 9px 0 0; gap: 22px; }
.desk-controls button { width: 12px; height: 12px; }
.desk-controls svg { display: block; width: 12px; height: 12px; }

.app { position: relative; flex: 1; min-height: 0; margin: 0 156px 0 41px; display: flex; flex-direction: column; background: #e9edfb; }
.title { height: 20px; flex: none; display: flex; align-items: center; gap: 4px; padding-left: 2px; background: #fff; white-space: nowrap; }
.logo { width: 15px; height: 15px; }
.menubar { height: 23px; flex: none; display: flex; align-items: center; padding-left: 4px; }
.menubar button { margin: 0 12px 0 0; }
.menubar .grip { margin-right: 6px; }
.menubar small { font-size: 10px; }
.grip { flex: none; width: 6px; height: 16px; background: radial-gradient(circle, #a0a4b4 1px, transparent 1px) 0 0 / 4px 4px repeat-y; }

.band { height: 24px; flex: none; display: flex; }
.toolbar { flex: none; height: 23px; display: flex; align-items: center; padding: 0 2px 0 4px; border-radius: 2px; background: linear-gradient(#fafbff, #dcdde9 60%, #b2b2c6); }
.toolbar .grip { margin-right: 2px; }
.slim .grip { margin-right: 0; }
.toolbar.slim { padding-left: 3px; }
.toolbar button { flex: none; width: 20px; height: 20px; display: flex; align-items: center; justify-content: center; }
.toolbar button svg { width: 15px; height: 15px; }
.toolbar .drop { width: 11px; }
.toolbar .drop svg { width: 6px; height: 6px; }
.toolbar .dim { width: 13px; }
.toolbar .dim svg { opacity: .5; }
.toolbar .on { border: 1px solid #3c94e0; background: #cfe6fa; }
.toolbar .gray { color: #777; }
.toolbar .red { color: #d81010; }
.sep { flex: none; width: 7px; height: 16px; background: linear-gradient(#bcbccc, #bcbccc) center / 1px 100% no-repeat; }
.sep.wide { width: 8px; }
.combo { appearance: none; border: 1px solid #adadad; border-radius: 0; height: 18px; padding: 0 3px; font: inherit; font-size: 11px; line-height: 16px; color: #000; background: #e2e2e2; }
.layer { width: 133px; margin: 0 2px 0 8px; background: #e2e2e2 url("data:image/svg+xml,%3Csvg xmlns='http://www.w3.org/2000/svg' width='10' height='8'%3E%3Cpath d='M1 2l4 4 4-4' fill='none' stroke='%23555'/%3E%3C/svg%3E") right 3px center no-repeat; }
.view { width: 180px; display: flex; justify-content: space-between; align-items: center; background: #fff; padding: 0 2px; margin: 0 2px; }
.view span { background: #3173c6; color: #fff; font-size: 12px; line-height: 14px; }
.view svg { width: 8px; height: 8px; }
.scope { width: 217px; background: #fff; font-size: 12px; }

.work { flex: 1; min-height: 0; display: flex; gap: 4px; }
.phead { flex: none; height: 17px; display: flex; align-items: center; padding: 0 2px 0 3px; background: linear-gradient(90deg, #b9cde0, #dbe6f4); }
.phead h2 { flex: 1; font-size: 12px; line-height: 16px; }
.phead button { width: 15px; height: 15px; display: flex; align-items: center; justify-content: center; }
.phead button svg { width: 9px; height: 9px; }
.phead button + button svg { width: 8px; height: 8px; }
.pbar { flex: none; padding: 2px 0 0 2px; overflow: hidden; display: flex; }

.project { flex: none; width: 183px; display: flex; flex-direction: column; }
.treebox { flex: 1; min-height: 0; display: flex; margin-top: 1px; border: 1px solid #8c8c8c; border-width: 2px 2px 1px; background: #fff; overflow: hidden; padding-right: 3px; }
.tree { flex: 1; min-width: 0; height: 275px; display: grid; grid-auto-rows: 1fr; overflow: hidden; font-size: 11px; }
.tree li { display: flex; align-items: center; white-space: nowrap; background: repeating-linear-gradient(#999 0 1px, transparent 1px 2px) 13px 0 / 1px 100% no-repeat; }
.tree .l0 { padding-left: 9px; }
.tree .l1, .tree .l2 { padding-left: 26px; background: repeating-linear-gradient(#999 0 1px, transparent 1px 2px) 13px 0 / 1px 100% no-repeat, repeating-linear-gradient(#999 0 1px, transparent 1px 2px) 30px 0 / 1px 100% no-repeat; }
.tree .l2 { padding-left: 44px; font-size: 12px; }
.tree .leaf { padding-left: 30px; }
.tree button { width: 9px; height: 9px; border: 1px solid #9a9a9a; border-radius: 1px; background: #fff; color: #204080; font: 9px/7px "DejaVu Sans", sans-serif; flex: none; display: flex; align-items: center; justify-content: center; }
.tree i { width: 5px; border-top: 1px dotted #888; }
.tree .leaf i { width: 10px; }
.tree svg { width: 15px; height: 15px; margin-right: 4px; flex: none; }
.vscroll { flex: none; width: 14px; background: #f0f0f0; display: flex; flex-direction: column; align-items: center; }
.vscroll svg { width: 8px; height: 14px; flex: none; }
.vscroll i { width: 100%; background: #cdcdcd; }
.tree-thumb { flex: 85; }
.vscroll .tree-thumb + svg { margin-top: 30px; }
.ptab { flex: none; height: 22px; padding-left: 2px; }
.ptab button { display: flex; align-items: center; gap: 3px; height: 18px; padding: 0 6px 0 4px; background: #fff; border-bottom: 1px solid #c4c4d0; }
.ptab svg { width: 14px; height: 12px; }

.board { flex: 1; min-width: 0; display: flex; flex-direction: column; border: solid #808080; border-width: 1px 0 0 1px; }
.pcb { flex: 1; min-height: 0; width: 100%; display: block; background: #000; }
.hscroll { flex: none; height: 16px; display: flex; align-items: center; background: #f0f0f0; }
.hscroll svg { width: 16px; height: 9px; flex: none; }
.hscroll i { height: 14px; background: #cdcdcd; }
.board-thumb { width: 38px; margin-left: 185px; }
.blue, .green, .silk, .thin { fill: none; }
.blue { stroke: #0080c0; stroke-width: 4px; }
.green { stroke: #00c040; stroke-width: 4px; }
.silk { stroke: #c0c0c0; stroke-width: 4px; stroke-linecap: round; stroke-linejoin: round; }
.thin { stroke-width: 1px; shape-rendering: crispEdges; }
.lav { fill: #aaaad5; }
.pink { fill: #ff9c9c; }
.white { fill: #fff; }
.num, .lbl { font: 12px "Liberation Mono", monospace; text-anchor: middle; fill: #c0c0c0; }
.lbl { fill: #800080; }
.tiny { font-size: 9px; }

.dock { flex: none; height: 213px; padding-top: 4px; display: flex; gap: 4px; overflow: hidden; }
.output { flex: none; width: 303px; display: flex; flex-direction: column; min-height: 0; }
.output .phead { padding-right: 1px; }
.sheet { flex: 1; min-width: 0; display: flex; flex-direction: column; }
.full { flex: 1; min-width: 0; }
.logbox { flex: 1; min-height: 0; margin: 2px 4px 0; border: 2px solid #808080; border-width: 2px 1px 1px 2px; display: grid; grid-template: minmax(0, 1fr) 16px / minmax(0, 1fr) 17px; background: #f0f0f0; }
.log { background: #fff; overflow: hidden; padding-left: 10px; font-family: "Liberation Sans", "Noto Sans CJK SC", sans-serif; }
.log p { white-space: pre; }
.log p:first-child { margin-top: -7px; }
.log-v { width: 15px; padding: 12px 0 8px; }
.log-v svg { width: 11px; }
.log-vthumb { height: 13px; margin-top: auto; }
.log-v svg:last-child { margin-top: 4px; }
.log-h { grid-column: 1 / 3; }
.log-h svg { margin: 0 8px 0 12px; width: 12px; height: 12px; }
.log-hthumb { width: 193px; }
.log-h svg:last-child { margin-left: 24px; }
.tabs { flex: none; height: 10px; padding-left: 5px; overflow: hidden; display: flex; align-items: flex-start; gap: 6px; white-space: nowrap; border-top: 1px solid #555; background: #f0f0f0; font-size: 10px; line-height: 12px; margin-top: 1px; }
.tabs svg { flex: none; width: 52px; height: 8px; margin: 3px 5px 0 0; }
.tabs b { font-weight: normal; display: flex; gap: 6px; }
.tabs b::after { content: ""; width: 1px; height: 10px; background: #333; transform: skewX(-25deg); }
.tabs .cur { background: #fff; }

.grid { flex: 1; min-height: 0; margin: 2px 0 0 3px; display: flex; flex-direction: column; justify-content: space-between; border: 1px solid #707070; border-width: 1px 0 1px 1px; background: #fff; overflow: hidden; }
table { border-collapse: collapse; table-layout: fixed; width: 791px; flex: none; }
.c-no { width: 49px; }
.c { width: 82px; }
.cw { width: 83px; }
th { height: 17px; padding: 0; border-right: 1px solid #333; border-bottom: 1px solid #000; background: #f4f4f4; font: bold 12px/14px "Noto Sans CJK SC", sans-serif; text-decoration: underline; overflow: hidden; white-space: nowrap; }
th.end { text-align: right; }
td { height: 15px; padding: 0 0 0 2px; border-right: 1px solid #333; border-bottom: 1px solid #999; font: 10px/12px "Liberation Mono", monospace; overflow: hidden; }
td:first-child { border-bottom-color: #333; padding-left: 1px; }
td a { font: 11px/12px "Liberation Sans", sans-serif; display: block; }
td.ok { background: #00f200; }
td.mark { padding: 0; text-align: center; }
td input { appearance: none; width: 11px; height: 11px; margin: 2px 0 0; border: 1px solid #222; background: #fff; display: inline-block; vertical-align: top; }
.sheet-h { border-top: 1px solid #ddd; }
.sheet-thumb { flex: 1; }

.note { position: absolute; left: 663px; top: 11px; color: #fa2814; font: 21px/26px "Noto Sans CJK SC", sans-serif; white-space: nowrap; }

.context { position: absolute; left: 725px; top: 115px; width: 192px; border: 1px solid #a0a0a0; padding: 0 1px; background: linear-gradient(90deg, #f0f0f0 22px, #dcdcdc 22px 23px, #fcfcfc 23px); box-shadow: 2px 2px 3px rgba(0, 0, 0, .5); }
.context button { width: 100%; height: 20px; display: flex; align-items: center; padding-right: 10px; border: 1px solid transparent; border-radius: 3px; white-space: nowrap; text-align: left; }
.context svg { width: 14px; height: 14px; margin: 0 9px 0 2px; flex: none; }
.context button:disabled { color: #838383; }
.context .navy { color: #000080; }
.context .hot { border-color: #9cc3e4; background: linear-gradient(#f2f8fd, #bcdcf5); }
.context kbd { margin-left: auto; font: 10px/16px "Noto Sans", sans-serif; }
.context .rule { height: 8px; margin-left: 30px; background: linear-gradient(#c8c8c8, #c8c8c8) center / 100% 1px no-repeat; }
.context .thinrule { height: 7px; }
.sub { margin: 0 -7px 0 auto; border: 4px solid transparent; border-left: 5px solid #000; border-right: 0; }
```
